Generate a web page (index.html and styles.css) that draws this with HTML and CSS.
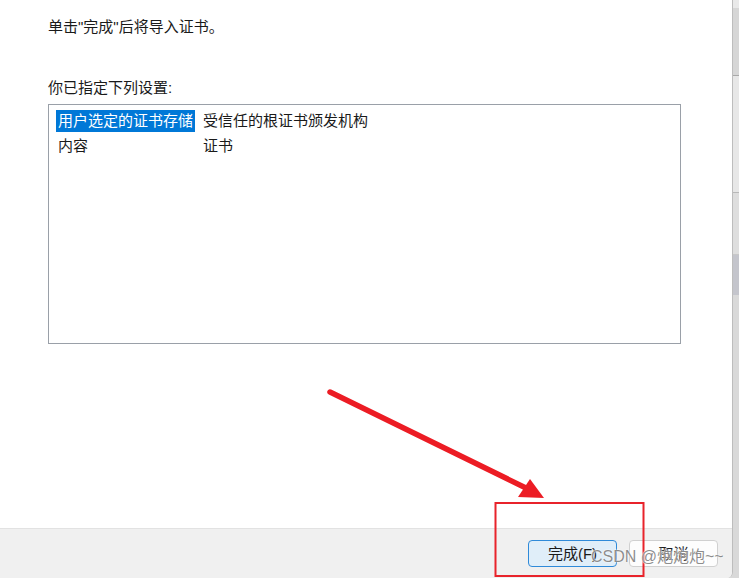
FILE: index.html
```html
<!DOCTYPE html>
<html lang="zh-CN">
<head>
<meta charset="utf-8">
<title>证书导入向导</title>
<link rel="stylesheet" href="styles.css">
</head>
<body>
<div class="screen">
  <div class="dialog">
    <div class="content">
      <p class="intro">单击"完成"后将导入证书。</p>
      <p class="label">你已指定下列设置:</p>
      <div class="listbox">
        <div class="row">
          <span class="cell key selected">用户选定的证书存储</span>
          <span class="cell val">受信任的根证书颁发机构</span>
        </div>
        <div class="row">
          <span class="cell key">内容</span>
          <span class="cell val">证书</span>
        </div>
      </div>
    </div>
    <div class="footer">
      <button class="btn primary">完成(F)</button>
      <button class="btn">取消</button>
    </div>
  </div>
  <div class="backdrop">
    <div class="bd bd1"></div>
    <div class="bd bd2"></div>
    <div class="bd bd3"></div>
    <div class="bd bd4"></div>
    <div class="bd bd5"></div>
    <div class="bd bd6"></div>
  </div>

  <svg class="annot" width="739" height="578" viewBox="0 0 739 578">
    <line x1="330" y1="392" x2="528" y2="489" stroke="#ec1c24" stroke-width="5.5" stroke-linecap="round"/>
    <polygon points="544,498 518,497 530,479" fill="#ec1c24"/>
    <rect x="495.5" y="503" width="148" height="73" fill="none" stroke="#e8232b" stroke-width="2"/>
  </svg>
  <div class="watermark">CSDN @炮炮炮~~</div>
</div>
</body>
</html>
```

FILE: styles.css
```css
html, body {
  margin: 0;
  padding: 0;
}
body {
  width: 739px;
  height: 578px;
  overflow: hidden;
  background: #d9d9d9;
  font-family: "Liberation Sans", "Noto Sans CJK SC", sans-serif;
  font-size: 15px;
  color: #1a1a1a;
}
.screen {
  position: relative;
  display: flex;
  width: 739px;
  height: 578px;
}
.dialog {
  width: 733px;
  height: 578px;
  display: flex;
  flex-direction: column;
  background: #ffffff;
  border-bottom-right-radius: 6px;
  border-right: 1px solid #bdbdbd;
  box-sizing: border-box;
  overflow: hidden;
}
.content {
  flex: 1;
  padding: 17px 0 0 48px;
}
.intro {
  margin: 0;
  line-height: 20px;
}
.label {
  margin: 41px 0 0 0;
  line-height: 20px;
}
.listbox {
  margin-top: 6px;
  width: 631px;
  height: 233px;
  border: 1px solid #9aa0a8;
  box-sizing: content-box;
  padding-top: 5px;
  display: flex;
  flex-direction: column;
  gap: 3px;
}
.row {
  display: flex;
  gap: 8px;
  height: 22px;
  padding-left: 7px;
}
.cell {
  line-height: 22px;
  white-space: nowrap;
}
.key {
  width: 137px;
  padding-left: 2px;
}
.key.selected {
  background: #0078d7;
  color: #ffffff;
}
.footer {
  height: 50px;
  background: #f0f0f0;
  border-top: 1px solid #e2e2e2;
  display: flex;
  justify-content: flex-end;
  align-items: flex-start;
  gap: 12px;
  padding: 11px 14px 0 0;
  box-sizing: border-box;
}
.btn {
  width: 89px;
  height: 27px;
  font-family: "Liberation Sans", "Noto Sans CJK SC", sans-serif;
  font-size: 15px;
  color: #1a1a1a;
  background: #fdfdfd;
  border: 1px solid #d0d0d0;
  border-radius: 4px;
  padding: 0;
  line-height: 25px;
}
.btn.primary {
  background: #e0eef9;
  border: 1px solid #2f8ad9;
}
.backdrop {
  width: 6px;
  height: 578px;
  display: flex;
  flex-direction: column;
  background: #dcdcdc;
}
.bd { width: 6px; }
.bd1 { height: 8px; background: #e9e9e9; }
.bd2 { height: 67px; background: #d6d6d6; border-bottom: 1px solid #a8a8a8; }
.bd3 { height: 116px; background: #e7e7e7; border-bottom: 1px solid #b8b8b8; }
.bd4 { height: 61px; background: #dedede; border-bottom: 1px solid #c8c8c8; }
.bd5 { height: 40px; background: #c4c5cc; }
.bd6 { flex: 1; background: #d9d9d9; }
.annot {
  position: absolute;
  left: 0;
  top: 0;
  pointer-events: none;
}
.watermark {
  position: absolute;
  left: 591px;
  top: 546px;
  font-size: 16px;
  line-height: 22px;
  color: rgba(120, 120, 120, 0.85);
  text-shadow: 0 0 1px #ffffff, 0 0 2px #ffffff;
  white-space: nowrap;
}
```
